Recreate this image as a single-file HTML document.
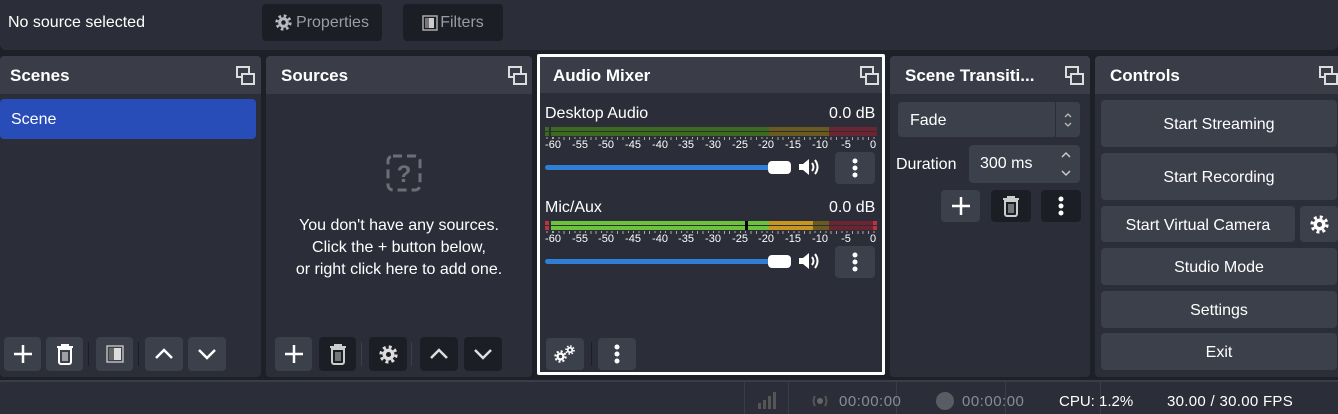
<!DOCTYPE html>
<html><head><meta charset="utf-8"><style>
*{box-sizing:border-box;margin:0;padding:0}
body{width:1338px;height:414px;background:#1e2028;font-family:"Liberation Sans","DejaVu Sans",sans-serif;color:#fff;position:relative;overflow:hidden;font-size:16px}
.a{position:absolute}
.panel{position:absolute;background:#2b2e38;border-radius:4px;overflow:hidden}
.hdr{position:absolute;left:0;right:0;top:0;height:38px;background:#3a3d48;font-weight:bold;font-size:17px;padding:10px 0 0 10px}
.btn{position:absolute;background:#3c404b;border-radius:4px;display:flex;align-items:center;justify-content:center;color:#fff}
.dk{background:#1c1e26}
.sep{position:absolute;width:1px;height:24px;background:#1c1e26}
.tick{position:absolute;font-size:11px;color:#fff;transform:translateX(-50%)}
.cb{position:absolute;left:1101px;width:236px;background:#3c404b;border-radius:4px;display:flex;align-items:center;justify-content:center;font-size:16px;padding-top:3px}
.st{position:absolute;top:393px;font-size:15px}
</style></head><body>
<svg width="0" height="0" style="position:absolute"><defs>
<symbol id="gear" viewBox="0 0 24 24"><circle cx="12" cy="12" r="7.5" fill="currentColor"/><circle cx="12" cy="12" r="9.5" fill="none" stroke="currentColor" stroke-width="4" stroke-dasharray="3.7 3.76"/><circle cx="12" cy="12" r="3.2" fill="var(--bg)"/></symbol>
</defs></svg>
<div class="a" style="left:0;top:0;width:1338px;height:50px;background:#2b2e38;border-radius:0 0 6px 6px"></div>
<div class="a" style="left:8px;top:14px;font-size:16px">No source selected</div>
<div class="btn dk" style="left:262px;top:4px;width:120px;height:37px;color:#9a9ca4;font-size:16px;--bg:#1c1e26">
<svg width="17" height="17" style="margin-right:4px;color:#b8bac0"><use href="#gear"/></svg>Properties</div>
<div class="btn dk" style="left:403px;top:4px;width:100px;height:37px;color:#9a9ca4;font-size:16px">
<svg width="16" height="16" viewBox="0 0 16 16" style="margin-right:2px"><rect x="1" y="1" width="14" height="14" fill="none" stroke="#aaa" stroke-width="1.5"/><rect x="3" y="3" width="4" height="10" fill="#777"/><rect x="7" y="3" width="5" height="10" fill="#ccc"/></svg>Filters</div>

<div class="panel" style="left:0;top:56px;width:261px;height:321px">
<div class="hdr">Scenes</div>
<div class="a" style="left:0;top:43px;width:256px;height:40px;background:#284cb8;border-radius:4px;padding:12px 0 0 11px;font-size:16px">Scene</div>
</div>
<div class="panel" style="left:266px;top:56px;width:266px;height:321px">
<div class="hdr" style="padding-left:15px">Sources</div>
<svg class="a" style="left:120px;top:98px" width="36" height="38" viewBox="0 0 36 38"><rect x="2" y="2" width="32" height="34" rx="5" fill="none" stroke="#6d6f76" stroke-width="3" stroke-dasharray="9 5"/><text x="18" y="28" text-anchor="middle" font-size="24" font-weight="bold" fill="#6d6f76" font-family="Liberation Sans">?</text></svg>
<div class="a" style="left:0;width:266px;top:159px;text-align:center;font-size:16px;line-height:22px">You don't have any sources.<br>Click the + button below,<br>or right click here to add one.</div>
</div>
<div class="panel" style="left:537px;top:54px;width:348px;height:321px;border:3px solid #fff;border-radius:2px">
<div class="hdr" style="top:0;height:36px;padding:9px 0 0 13px">Audio Mixer</div>
</div>
<div class="panel" style="left:890px;top:56px;width:200px;height:321px">
<div class="hdr" style="padding-left:15px">Scene Transiti...</div>
<div class="a" style="left:8px;top:46px;width:182px;height:35px;background:#3c404b;border-radius:4px;padding:10px 0 0 12px;font-size:16px">Fade</div>
<div class="a" style="left:165px;top:46px;width:1px;height:35px;background:#2b2e38"></div>
<svg class="a" style="left:173px;top:55px" width="10" height="18"><path d="M2 6l3-3 3 3M2 12l3 3 3-3" stroke="#bbb" stroke-width="1.3" fill="none"/></svg>
<div class="a" style="left:6px;top:100px;font-size:16px">Duration</div>
<div class="a" style="left:79px;top:89px;width:111px;height:38px;background:#3c404b;border-radius:4px;padding:10px 0 0 11px;font-size:16px">300 ms</div>
<svg class="a" style="left:170px;top:94px" width="12" height="28"><path d="M2 7l4-4 4 4M2 21l4 4 4-4" stroke="#ccc" stroke-width="1.5" fill="none"/></svg>
</div>
<div class="panel" style="left:1095px;top:56px;width:250px;height:321px">
<div class="hdr" style="padding-left:15px">Controls</div>
</div>
<div class="cb" style="top:100px;height:47px">Start Streaming</div>
<div class="cb" style="top:153px;height:47px">Start Recording</div>
<div class="cb" style="top:206px;height:36px;width:194px">Start Virtual Camera</div>
<div class="btn" style="left:1300px;top:206px;width:38px;height:36px;--bg:#3c404b"><svg width="19" height="19" style="color:#fff"><use href="#gear"/></svg></div>
<div class="cb" style="top:248px;height:37px">Studio Mode</div>
<div class="cb" style="top:291px;height:37px">Settings</div>
<div class="cb" style="top:333px;height:37px">Exit</div>

<svg class="a" style="left:236px;top:66px" width="20" height="20"><rect x="1" y="1" width="12" height="10" fill="none" stroke="#ddd" stroke-width="2"/><rect x="6" y="8" width="12" height="10" fill="#3a3d48" stroke="#ddd" stroke-width="2"/></svg>
<svg class="a" style="left:508px;top:66px" width="20" height="20"><rect x="1" y="1" width="12" height="10" fill="none" stroke="#ddd" stroke-width="2"/><rect x="6" y="8" width="12" height="10" fill="#3a3d48" stroke="#ddd" stroke-width="2"/></svg>
<svg class="a" style="left:860px;top:66px" width="20" height="20"><rect x="1" y="1" width="12" height="10" fill="none" stroke="#ddd" stroke-width="2"/><rect x="6" y="8" width="12" height="10" fill="#3a3d48" stroke="#ddd" stroke-width="2"/></svg>
<svg class="a" style="left:1065px;top:66px" width="20" height="20"><rect x="1" y="1" width="12" height="10" fill="none" stroke="#ddd" stroke-width="2"/><rect x="6" y="8" width="12" height="10" fill="#3a3d48" stroke="#ddd" stroke-width="2"/></svg>
<svg class="a" style="left:1319px;top:66px" width="20" height="20"><rect x="1" y="1" width="12" height="10" fill="none" stroke="#ddd" stroke-width="2"/><rect x="6" y="8" width="12" height="10" fill="#3a3d48" stroke="#ddd" stroke-width="2"/></svg>

<div class="a" style="left:545px;top:105px">Desktop Audio</div>
<div class="a" style="left:829px;top:105px">0.0 dB</div>
<div class="a" style="left:545px;top:127px;width:332px;height:4px;background:linear-gradient(90deg,#3d6b1e 0 224px,#6b5a1e 224px 284px,#6b2430 284px)"></div>
<div class="a" style="left:545px;top:132px;width:332px;height:4px;background:linear-gradient(90deg,#3d6b1e 0 224px,#6b5a1e 224px 284px,#6b2430 284px)"></div>
<div class="a" style="left:549px;top:127px;width:2px;height:9px;background:#2b2e38"></div>
<div class="a" style="left:545px;top:199px">Mic/Aux</div>
<div class="a" style="left:829px;top:199px">0.0 dB</div>
<div class="a" style="left:545px;top:221px;width:332px;height:4px;background:linear-gradient(90deg,#c0303e 0 4px,#2b2e38 4px 6px,#6cc33a 6px 224px,#c8961e 224px 268px,#6b5a1e 268px 284px,#6b2430 284px 328px,#c0303e 328px)"></div>
<div class="a" style="left:545px;top:226px;width:332px;height:4px;background:linear-gradient(90deg,#c0303e 0 4px,#2b2e38 4px 6px,#6cc33a 6px 224px,#c8961e 224px 268px,#6b5a1e 268px 284px,#6b2430 284px 328px,#c0303e 328px)"></div>
<div class="a" style="left:745px;top:221px;width:3px;height:9px;background:#000"></div>
<div class="a" style="left:545px;top:137px;width:332px;height:3px;background:repeating-linear-gradient(90deg,#aaa 0 1px,transparent 1px 5.34px);background-position:8px 0"></div>
<div class="a" style="left:545px;top:231px;width:332px;height:3px;background:repeating-linear-gradient(90deg,#aaa 0 1px,transparent 1px 5.34px);background-position:8px 0"></div>
<div class="a" style="left:0;top:139px;width:1px;height:14px;background:#2b2e38"></div>
<div class="a" style="left:0;top:139px">
<span class="tick" style="left:553px;background:#2b2e38">-60</span><span class="tick" style="left:580px;background:#2b2e38">-55</span><span class="tick" style="left:606px;background:#2b2e38">-50</span><span class="tick" style="left:633px;background:#2b2e38">-45</span><span class="tick" style="left:660px;background:#2b2e38">-40</span><span class="tick" style="left:686px;background:#2b2e38">-35</span><span class="tick" style="left:713px;background:#2b2e38">-30</span><span class="tick" style="left:740px;background:#2b2e38">-25</span><span class="tick" style="left:766px;background:#2b2e38">-20</span><span class="tick" style="left:793px;background:#2b2e38">-15</span><span class="tick" style="left:820px;background:#2b2e38">-10</span><span class="tick" style="left:846px;background:#2b2e38">-5</span><span class="tick" style="left:873px;background:#2b2e38">0</span></div>
<div class="a" style="left:0;top:233px">
<span class="tick" style="left:553px;background:#2b2e38">-60</span><span class="tick" style="left:580px;background:#2b2e38">-55</span><span class="tick" style="left:606px;background:#2b2e38">-50</span><span class="tick" style="left:633px;background:#2b2e38">-45</span><span class="tick" style="left:660px;background:#2b2e38">-40</span><span class="tick" style="left:686px;background:#2b2e38">-35</span><span class="tick" style="left:713px;background:#2b2e38">-30</span><span class="tick" style="left:740px;background:#2b2e38">-25</span><span class="tick" style="left:766px;background:#2b2e38">-20</span><span class="tick" style="left:793px;background:#2b2e38">-15</span><span class="tick" style="left:820px;background:#2b2e38">-10</span><span class="tick" style="left:846px;background:#2b2e38">-5</span><span class="tick" style="left:873px;background:#2b2e38">0</span></div>
<div class="a" style="left:545px;top:165px;width:230px;height:5px;background:#2f7fd6;border-radius:3px"></div>
<div class="a" style="left:768px;top:161px;width:23px;height:13px;background:#fff;border-radius:4px"></div>
<div class="a" style="left:545px;top:259px;width:230px;height:5px;background:#2f7fd6;border-radius:3px"></div>
<div class="a" style="left:768px;top:255px;width:23px;height:13px;background:#fff;border-radius:4px"></div>
<svg class="a" style="left:797px;top:157px" width="24" height="20" viewBox="0 0 24 20"><path d="M2 7h4l6-5v16l-6-5H2z" fill="#fff"/><path d="M15 6q3 4 0 8M18 3q5 7 0 14" stroke="#fff" stroke-width="2" fill="none"/></svg>
<svg class="a" style="left:797px;top:251px" width="24" height="20" viewBox="0 0 24 20"><path d="M2 7h4l6-5v16l-6-5H2z" fill="#fff"/><path d="M15 6q3 4 0 8M18 3q5 7 0 14" stroke="#fff" stroke-width="2" fill="none"/></svg>
<div class="btn" style="left:835px;top:152px;width:40px;height:32px"><svg width="6" height="20"><circle cx="3" cy="3" r="2.5" fill="#fff"/><circle cx="3" cy="10" r="2.5" fill="#fff"/><circle cx="3" cy="17" r="2.5" fill="#fff"/></svg></div>
<div class="btn" style="left:835px;top:246px;width:40px;height:32px"><svg width="6" height="20"><circle cx="3" cy="3" r="2.5" fill="#fff"/><circle cx="3" cy="10" r="2.5" fill="#fff"/><circle cx="3" cy="17" r="2.5" fill="#fff"/></svg></div>
<div class="btn" style="left:546px;top:338px;width:38px;height:32px;--bg:#3c404b;color:#fff"><svg width="24" height="20" viewBox="0 0 24 20"><svg x="1" y="6" width="13" height="13"><use href="#gear"/></svg><svg x="12" y="1" width="10" height="10"><use href="#gear"/></svg></svg></div>
<div class="sep" style="left:591px;top:342px"></div>
<div class="btn" style="left:598px;top:338px;width:38px;height:32px"><svg width="6" height="20"><circle cx="3" cy="3" r="2.5" fill="#fff"/><circle cx="3" cy="10" r="2.5" fill="#fff"/><circle cx="3" cy="17" r="2.5" fill="#fff"/></svg></div>

<div class="btn" style="left:4px;top:337px;width:37px;height:34px"><svg width="20" height="20"><path d="M10 1v18M1 10h18" stroke="#fff" stroke-width="2.5"/></svg></div>
<div class="btn" style="left:46px;top:337px;width:37px;height:34px"><svg width="20" height="22" viewBox="0 0 20 22"><path d="M2 4h16M7 4V2h6v2" stroke="#fff" stroke-width="2" fill="none"/><path d="M4 6h12v13a2 2 0 01-2 2H6a2 2 0 01-2-2z" fill="none" stroke="#fff" stroke-width="2"/><path d="M8 9v9M10 9v9M12 9v9" stroke="#fff" stroke-width="1"/></svg></div>
<div class="sep" style="left:88px;top:342px"></div>
<div class="btn" style="left:96px;top:337px;width:37px;height:34px"><svg width="18" height="18"><rect x="1" y="1" width="16" height="16" fill="none" stroke="#bbb" stroke-width="1.5"/><rect x="3" y="3" width="5" height="12" fill="#666"/><rect x="8" y="3" width="7" height="12" fill="#ddd"/></svg></div>
<div class="sep" style="left:138px;top:342px"></div>
<div class="btn" style="left:145px;top:337px;width:38px;height:34px"><svg width="20" height="12"><path d="M2 10l8-8 8 8" stroke="#fff" stroke-width="2.5" fill="none"/></svg></div>
<div class="btn" style="left:188px;top:337px;width:38px;height:34px"><svg width="20" height="12"><path d="M2 2l8 8 8-8" stroke="#fff" stroke-width="2.5" fill="none"/></svg></div>
<div class="btn" style="left:275px;top:337px;width:37px;height:34px"><svg width="20" height="20"><path d="M10 1v18M1 10h18" stroke="#fff" stroke-width="2.5"/></svg></div>
<div class="btn dk" style="left:319px;top:337px;width:37px;height:34px"><svg width="20" height="22" viewBox="0 0 20 22"><path d="M2 4h16M7 4V2h6v2" stroke="#ccc" stroke-width="2" fill="none"/><path d="M4 6h12v13a2 2 0 01-2 2H6a2 2 0 01-2-2z" fill="none" stroke="#ccc" stroke-width="2"/><path d="M8 9v9M10 9v9M12 9v9" stroke="#ccc" stroke-width="1"/></svg></div>
<div class="sep" style="left:361px;top:342px;background:#3c404b"></div>
<div class="btn dk" style="left:369px;top:337px;width:38px;height:34px;--bg:#1c1e26"><svg width="19" height="19" style="color:#ddd"><use href="#gear"/></svg></div>
<div class="sep" style="left:411px;top:342px;background:#3c404b"></div>
<div class="btn dk" style="left:420px;top:337px;width:38px;height:34px"><svg width="20" height="12"><path d="M2 10l8-8 8 8" stroke="#ddd" stroke-width="2.5" fill="none"/></svg></div>
<div class="btn dk" style="left:464px;top:337px;width:38px;height:34px"><svg width="20" height="12"><path d="M2 2l8 8 8-8" stroke="#ddd" stroke-width="2.5" fill="none"/></svg></div>
<div class="btn" style="left:941px;top:190px;width:39px;height:32px"><svg width="20" height="20"><path d="M10 1v18M1 10h18" stroke="#fff" stroke-width="2.5"/></svg></div>
<div class="btn dk" style="left:991px;top:190px;width:40px;height:32px"><svg width="20" height="22" viewBox="0 0 20 22"><path d="M2 4h16M7 4V2h6v2" stroke="#ccc" stroke-width="2" fill="none"/><path d="M4 6h12v13a2 2 0 01-2 2H6a2 2 0 01-2-2z" fill="none" stroke="#ccc" stroke-width="2"/><path d="M8 9v9M10 9v9M12 9v9" stroke="#ccc" stroke-width="1"/></svg></div>
<div class="btn dk" style="left:1041px;top:190px;width:40px;height:32px"><svg width="6" height="20"><circle cx="3" cy="3" r="2.5" fill="#fff"/><circle cx="3" cy="10" r="2.5" fill="#fff"/><circle cx="3" cy="17" r="2.5" fill="#fff"/></svg></div>

<div class="a" style="left:0;top:380px;width:1338px;height:34px;background:#2b2e38;border-top:2px solid #3a3d48"></div>
<div class="a" style="left:744px;top:382px;width:1px;height:32px;background:#3a3d48"></div>
<div class="a" style="left:788px;top:382px;width:1px;height:32px;background:#3a3d48"></div>
<div class="a" style="left:896px;top:382px;width:1px;height:32px;background:#3a3d48"></div>
<div class="a" style="left:1005px;top:382px;width:1px;height:32px;background:#3a3d48"></div>
<div class="a" style="left:1100px;top:382px;width:1px;height:32px;background:#3a3d48"></div>
<svg class="a" style="left:757px;top:391px" width="22" height="18"><rect x="1" y="12" width="3" height="6" fill="#555"/><rect x="6" y="9" width="3" height="9" fill="#555"/><rect x="11" y="5" width="3" height="13" fill="#555"/><rect x="16" y="1" width="3" height="17" fill="#555"/></svg>
<svg class="a" style="left:810px;top:392px" width="20" height="18"><circle cx="10" cy="9" r="3" fill="#666"/><path d="M5 4q-3 5 0 10M15 4q3 5 0 10" stroke="#555" stroke-width="2" fill="none"/></svg>
<div class="st" style="left:839px;color:#8a8c94;letter-spacing:0.5px">00:00:00</div>
<div class="a" style="left:936px;top:392px;width:18px;height:18px;border-radius:50%;background:#5a5c64"></div>
<div class="st" style="left:962px;color:#8a8c94;letter-spacing:0.5px">00:00:00</div>
<div class="st" style="left:1059px">CPU: 1.2%</div>
<div class="st" style="left:1167px;letter-spacing:0.3px">30.00 / 30.00 FPS</div>
</body></html>
